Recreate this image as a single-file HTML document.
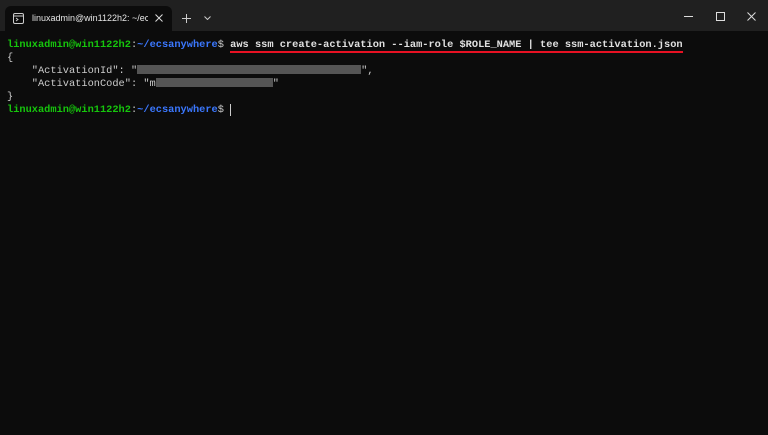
<!DOCTYPE html>
<html><head><style>
html,body{margin:0;padding:0;width:768px;height:435px;overflow:hidden;background:#0c0c0c}
.bar{position:absolute;left:0;top:0;width:768px;height:31px;background:#202020}
.tab{position:absolute;left:5px;top:6px;width:167px;height:25px;background:#0c0c0c;border-radius:6px 6px 0 0}
.tab .t{position:absolute;left:27px;top:7px;width:116px;overflow:hidden;font:9px "Liberation Sans",sans-serif;color:#e6e6e6;white-space:nowrap}
.term{position:absolute;left:7px;top:39px;font:10.33px/13px "Liberation Mono",monospace;color:#cccccc;white-space:pre}
.g{color:#16c60c;font-weight:bold}.b{color:#3b78ff;font-weight:bold}.w{color:#e0e0e0;font-weight:bold}
.u{border-bottom:2px solid #e81123}
.blur{display:inline-block;height:9px;background:#555;vertical-align:-1px}
</style></head><body>
<div class="bar">
<div class="tab">
<svg style="position:absolute;left:8px;top:7px" width="11" height="11" viewBox="0 0 11 11"><rect x="0.5" y="0.5" width="10" height="10" rx="1.5" fill="none" stroke="#ccc"/><line x1="0.5" y1="3" x2="10.5" y2="3" stroke="#ccc"/><path d="M3 5l2 1.5-2 1.5" fill="none" stroke="#ccc" stroke-width=".9"/></svg>
<span class="t">linuxadmin@win1122h2: ~/ecsanywhere</span>
<svg style="position:absolute;left:150px;top:8px" width="8" height="8" viewBox="0 0 8 8"><path d="M0.5 .5l7 7M7.5 .5l-7 7" stroke="#ddd" stroke-width="1"/></svg>
</div>
<svg style="position:absolute;left:182px;top:14px" width="9" height="9" viewBox="0 0 9 9"><path d="M4.5 0v9M0 4.5h9" stroke="#ccc"/></svg>
<svg style="position:absolute;left:204px;top:16px" width="7" height="4" viewBox="0 0 7 4"><path d="M.5 .5l3 3 3-3" fill="none" stroke="#ccc"/></svg>
<svg style="position:absolute;left:684px;top:16px" width="9" height="1"><rect width="9" height="1" fill="#ddd"/></svg>
<svg style="position:absolute;left:716px;top:12px" width="9" height="9"><rect x=".5" y=".5" width="8" height="8" fill="none" stroke="#ddd"/></svg>
<svg style="position:absolute;left:747px;top:12px" width="9" height="9" viewBox="0 0 9 9"><path d="M.5 .5l8 8M8.5 .5l-8 8" stroke="#ddd"/></svg>
</div>
<div class="term"><span class="g">linuxadmin@win1122h2</span>:<span class="b">~/ecsanywhere</span>$ <span class="w u">aws ssm create-activation --iam-role $ROLE_NAME | tee ssm-activation.json</span>
{
    "ActivationId": "<span class="blur" style="width:224px"></span>",
    "ActivationCode": "m<span class="blur" style="width:117px"></span>"
}
<span class="g">linuxadmin@win1122h2</span>:<span class="b">~/ecsanywhere</span>$ <span style="border-left:1px solid #ccc"> </span></div>
</body></html>
